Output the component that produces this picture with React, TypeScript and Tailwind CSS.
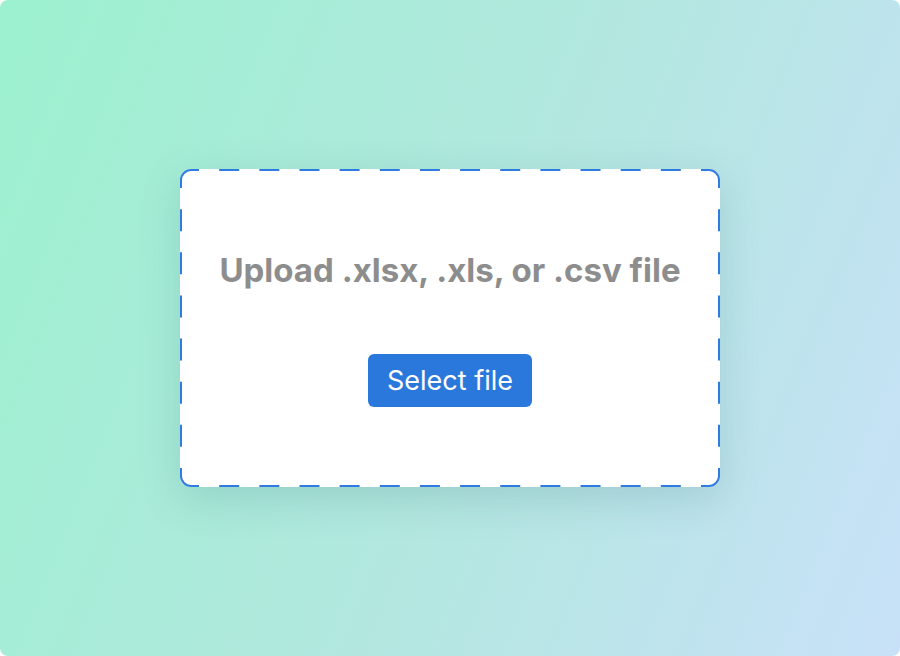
const W = 540;
const H = 318;
const CORNER = 19;
const BLUE = "#2f7be0";

// evenly spread dashes between the two solid corners of one side
function dashes(len: number, count: number, dash: number) {
  const free = len - 2 * CORNER - count * dash;
  const gap = free / (count + 1);
  const out: number[] = [];
  for (let i = 0; i < count; i++) out.push(CORNER + gap + i * (dash + gap));
  return out;
}

function DashedBorder() {
  const top = dashes(W, 12, 20);
  const side = dashes(H, 6, 22);
  return (
    <svg
      className="absolute inset-0 pointer-events-none"
      width={W}
      height={H}
      viewBox={`0 0 ${W} ${H}`}
      fill="none"
      stroke={BLUE}
      strokeWidth={2}
    >
      <path d={`M1 ${CORNER} V11 A10 10 0 0 1 11 1 H${CORNER}`} />
      <path d={`M${W - CORNER} 1 H${W - 11} A10 10 0 0 1 ${W - 1} 11 V${CORNER}`} />
      <path d={`M${W - 1} ${H - CORNER} V${H - 11} A10 10 0 0 1 ${W - 11} ${H - 1} H${W - CORNER}`} />
      <path d={`M${CORNER} ${H - 1} H11 A10 10 0 0 1 1 ${H - 11} V${H - CORNER}`} />
      {top.map((x) => (
        <g key={"h" + x}>
          <line x1={x} y1={1} x2={x + 20} y2={1} />
          <line x1={x} y1={H - 1} x2={x + 20} y2={H - 1} />
        </g>
      ))}
      {side.map((y) => (
        <g key={"v" + y}>
          <line x1={1} y1={y} x2={1} y2={y + 22} />
          <line x1={W - 1} y1={y} x2={W - 1} y2={y + 22} />
        </g>
      ))}
    </svg>
  );
}

export default function App() {
  return (
    <div className="w-[900px] h-[656px] bg-white">
      <div className="w-full h-full rounded-[8px] bg-[linear-gradient(112deg,#9cf1cf_0%,#b3e7e0_55%,#c8e1f8_100%)] flex items-center justify-center font-['Inter','Liberation_Sans',sans-serif]">
        {/* Upload card */}
        <div className="relative w-[540px] h-[318px] bg-white rounded-[10px] shadow-[0_12px_40px_rgba(40,100,110,0.18)] flex flex-col items-center pt-[81px]">
          <DashedBorder />
          <h1 className="text-[33px] leading-[40px] font-bold text-[#8d8d8d]">
            Upload .xlsx, .xls, or .csv file
          </h1>
          <button className="mt-[64px] w-[164px] h-[53px] rounded-[6px] bg-[#2b78dc] text-white text-[27px] leading-none">
            Select file
          </button>
        </div>
      </div>
    </div>
  );
}
